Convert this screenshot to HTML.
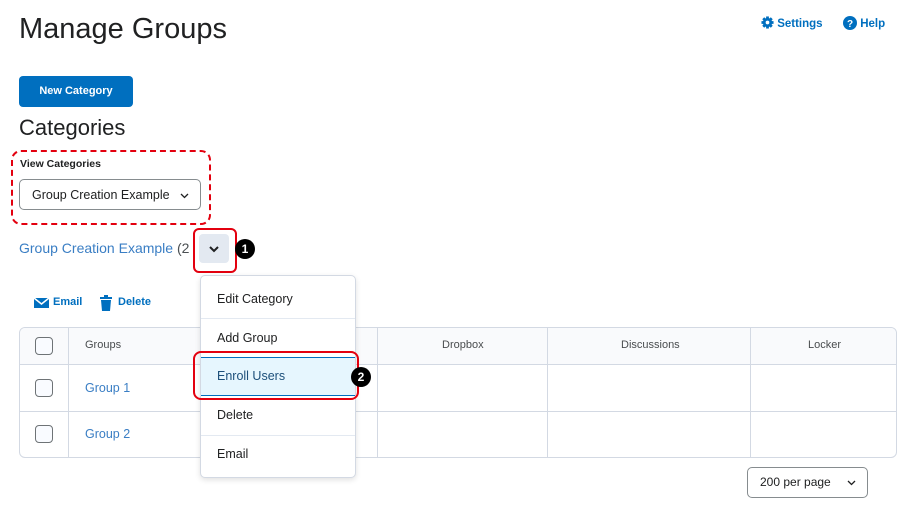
<!DOCTYPE html>
<html><head><style>
body{margin:0;width:908px;height:508px;background:#fff;font-family:"Liberation Sans",sans-serif;position:relative;overflow:hidden;color:#202122}
.a{position:absolute}
.cb{position:absolute;width:16px;height:16px;border:1.5px solid #6e7376;border-radius:4px;background:#f9fbff}
.vl{position:absolute;width:1px;background:#d3d9e3}
.hl{position:absolute;height:1px;background:#d3d9e3}
.mi{position:absolute;left:217px;font-size:12.5px;color:#202122}
</style></head><body>
<div class="a" style="left:19px;top:13px;font-size:29px;color:#202122">Manage Groups</div>
<div class="a" style="left:761px;top:16px;font-size:11.5px;font-weight:bold;color:#006fbf">
<svg width="13" height="13" viewBox="0 0 14 14" style="vertical-align:-2px"><circle cx="7" cy="7" r="5" fill="#006fbf"/><g stroke="#006fbf" stroke-width="3"><line x1="7" y1="0.5" x2="7" y2="13.5"/><line x1="0.5" y1="7" x2="13.5" y2="7"/><line x1="2.4" y1="2.4" x2="11.6" y2="11.6"/><line x1="11.6" y1="2.4" x2="2.4" y2="11.6"/></g><circle cx="7" cy="7" r="2" fill="#fff"/></svg> Settings</div>
<div class="a" style="left:843px;top:16px;font-size:11.5px;font-weight:bold;color:#006fbf">
<svg width="14" height="14" viewBox="0 0 14 14" style="vertical-align:-3px"><circle cx="7" cy="7" r="7" fill="#006fbf"/><text x="7" y="11" font-size="10" font-weight="bold" fill="#fff" text-anchor="middle" font-family="Liberation Sans">?</text></svg> Help</div>
<div class="a" style="left:19px;top:76px;width:114px;height:31px;background:#006fbf;border-radius:4px;color:#fff;font-size:11px;font-weight:bold;text-align:center;line-height:31px">New Category</div>
<div class="a" style="left:19px;top:115px;font-size:22px">Categories</div>
<div class="a" style="left:11px;top:150px;width:196px;height:71px;border:2px dashed #e3000f;border-radius:10px"></div>
<div class="a" style="left:20px;top:158px;font-size:10.5px;font-weight:bold">View Categories</div>
<div class="a" style="left:19px;top:179px;width:182px;height:31px;border:1px solid #868c8f;border-radius:5px;font-size:12.5px;line-height:30px;box-sizing:border-box;padding-left:12px">Group Creation Example<svg style="position:absolute;right:11px;top:13px" width="9" height="6"><path d="M1 1l3.5 3.5L8 1" stroke="#202122" stroke-width="1.3" fill="none"/></svg></div>
<div class="a" style="left:19px;top:240px;font-size:14px;color:#3a7ec4">Group Creation Example <span style="color:#4a4f52">(2</span></div>
<div class="a" style="left:199px;top:234px;width:30px;height:29px;background:#e3e9f1;border-radius:4px"></div>
<svg class="a" style="left:208px;top:245px" width="12" height="8"><path d="M2 2l4 4 4-4" stroke="#202122" stroke-width="2" fill="none"/></svg>
<div class="a" style="left:193px;top:228px;width:40px;height:41px;border:2px solid #e3000f;border-radius:6px"></div>
<div class="a" style="left:235px;top:239px;width:20px;height:20px;border-radius:50%;background:#000;color:#fff;font-size:12px;font-weight:bold;text-align:center;line-height:20px">1</div>
<svg class="a" style="left:34px;top:297px" width="15" height="12"><rect x="0" y="1" width="15" height="10" fill="#006fbf"/><path d="M0 1l7.5 6 7.5-6" stroke="#fff" stroke-width="1.5" fill="none"/></svg>
<div class="a" style="left:53px;top:296px;font-size:11px;font-weight:bold;color:#006fbf">Email</div>
<svg class="a" style="left:100px;top:295px" width="12" height="16"><rect x="0" y="2" width="12" height="2" fill="#006fbf"/><rect x="4" y="0" width="4" height="2" fill="#006fbf"/><path d="M1 5h10l-1 11H2z" fill="#006fbf"/></svg>
<div class="a" style="left:118px;top:296px;font-size:11px;font-weight:bold;color:#006fbf">Delete</div>
<div class="a" style="left:19px;top:327px;width:878px;height:131px;border:1px solid #d3d9e3;border-radius:6px;box-sizing:border-box;overflow:hidden">
<div style="height:37px;background:#f9fafc"></div></div>
<div class="hl" style="left:19px;top:364px;width:878px"></div>
<div class="hl" style="left:19px;top:411px;width:878px"></div>
<div class="vl" style="left:68px;top:327px;height:131px"></div>
<div class="vl" style="left:377px;top:327px;height:131px"></div>
<div class="vl" style="left:547px;top:327px;height:131px"></div>
<div class="vl" style="left:750px;top:327px;height:131px"></div>
<div class="cb" style="left:35px;top:337px"></div>
<div class="cb" style="left:35px;top:379px"></div>
<div class="cb" style="left:35px;top:425px"></div>
<div class="a" style="left:85px;top:339px;font-size:11px;color:#494c4e">Groups</div>
<div class="a" style="left:442px;top:339px;font-size:11px;color:#494c4e">Dropbox</div>
<div class="a" style="left:621px;top:339px;font-size:11px;color:#494c4e">Discussions</div>
<div class="a" style="left:808px;top:339px;font-size:11px;color:#494c4e">Locker</div>
<div class="a" style="left:85px;top:381px;font-size:12.5px;color:#3a7ec4">Group 1</div>
<div class="a" style="left:85px;top:427px;font-size:12.5px;color:#3a7ec4">Group 2</div>
<div class="a" style="left:747px;top:467px;width:121px;height:31px;border:1px solid #868c8f;border-radius:5px;box-sizing:border-box;font-size:12px;line-height:29px;padding-left:12px">200 per page<svg style="position:absolute;right:11px;top:12px" width="9" height="6"><path d="M1 1l3.5 3.5L8 1" stroke="#202122" stroke-width="1.3" fill="none"/></svg></div>
<div class="a" style="left:200px;top:275px;width:156px;height:203px;background:#fff;border:1px solid #d3d9e3;border-radius:5px;box-shadow:0 2px 6px rgba(0,0,0,.12);box-sizing:border-box"></div>
<div class="hl" style="left:201px;top:318px;width:154px;background:#e3e9f1"></div>
<div class="hl" style="left:201px;top:435px;width:154px;background:#e3e9f1"></div>
<div class="a" style="left:201px;top:357px;width:154px;height:39px;background:#e6f6fe;border-top:1px solid #006fbf;border-bottom:1px solid #006fbf;box-sizing:border-box"></div>
<div class="mi" style="top:292px">Edit Category</div>
<div class="mi" style="top:331px">Add Group</div>
<div class="mi" style="top:369px;color:#1c4f7a">Enroll Users</div>
<div class="mi" style="top:408px">Delete</div>
<div class="mi" style="top:447px">Email</div>
<div class="a" style="left:193px;top:351px;width:166px;height:49px;border:2px solid #e3000f;border-radius:8px;box-sizing:border-box"></div>
<div class="a" style="left:351px;top:367px;width:20px;height:20px;border-radius:50%;background:#000;color:#fff;font-size:12px;font-weight:bold;text-align:center;line-height:20px">2</div>
</body></html>
